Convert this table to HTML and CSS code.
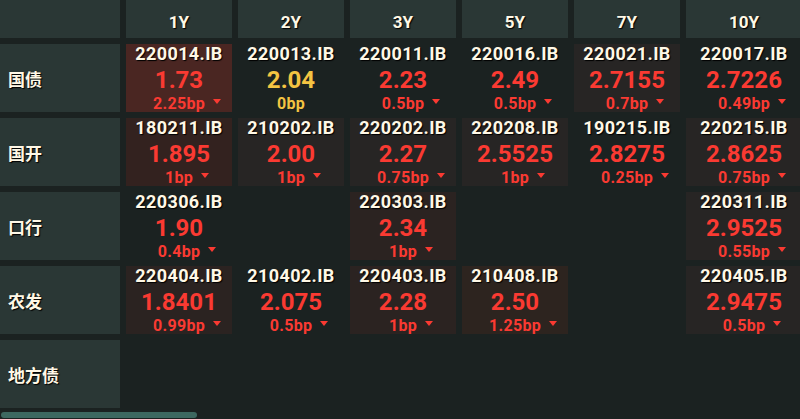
FILE: index.html
```html
<!DOCTYPE html>
<html lang="zh-CN">
<head>
  <meta charset="UTF-8">
  <meta name="viewport" content="width=device-width, initial-scale=1.0">
  <title>利率债报价</title>
  <link rel="stylesheet" href="styles.css">
</head>
<body>
  <div class="wrap">
    <div class="board">
      <!-- header -->
      <div class="head"></div>
      <div class="head">1Y</div>
      <div class="head">2Y</div>
      <div class="head">3Y</div>
      <div class="head">5Y</div>
      <div class="head">7Y</div>
      <div class="head">10Y</div>

      <!-- 国债 -->
      <div class="label">国债</div>
      <div class="cell bg-hot">
        <div class="code">220014.IB</div>
        <div class="yield">1.73</div>
        <div class="chg"><span class="down">2.25bp</span></div>
      </div>
      <div class="cell flat">
        <div class="code">220013.IB</div>
        <div class="yield">2.04</div>
        <div class="chg"><span>0bp</span></div>
      </div>
      <div class="cell">
        <div class="code">220011.IB</div>
        <div class="yield">2.23</div>
        <div class="chg"><span class="down">0.5bp</span></div>
      </div>
      <div class="cell">
        <div class="code">220016.IB</div>
        <div class="yield">2.49</div>
        <div class="chg"><span class="down">0.5bp</span></div>
      </div>
      <div class="cell bg-gray">
        <div class="code">220021.IB</div>
        <div class="yield">2.7155</div>
        <div class="chg"><span class="down">0.7bp</span></div>
      </div>
      <div class="cell">
        <div class="code">220017.IB</div>
        <div class="yield">2.7226</div>
        <div class="chg"><span class="down">0.49bp</span></div>
      </div>

      <!-- 国开 -->
      <div class="label">国开</div>
      <div class="cell bg-red">
        <div class="code">180211.IB</div>
        <div class="yield">1.895</div>
        <div class="chg"><span class="down">1bp</span></div>
      </div>
      <div class="cell bg-gray">
        <div class="code">210202.IB</div>
        <div class="yield">2.00</div>
        <div class="chg"><span class="down">1bp</span></div>
      </div>
      <div class="cell bg-gray">
        <div class="code">220202.IB</div>
        <div class="yield">2.27</div>
        <div class="chg"><span class="down">0.75bp</span></div>
      </div>
      <div class="cell bg-gray">
        <div class="code">220208.IB</div>
        <div class="yield">2.5525</div>
        <div class="chg"><span class="down">1bp</span></div>
      </div>
      <div class="cell">
        <div class="code">190215.IB</div>
        <div class="yield">2.8275</div>
        <div class="chg"><span class="down">0.25bp</span></div>
      </div>
      <div class="cell bg-gray">
        <div class="code">220215.IB</div>
        <div class="yield">2.8625</div>
        <div class="chg"><span class="down">0.75bp</span></div>
      </div>

      <!-- 口行 -->
      <div class="label">口行</div>
      <div class="cell">
        <div class="code">220306.IB</div>
        <div class="yield">1.90</div>
        <div class="chg"><span class="down">0.4bp</span></div>
      </div>
      <div class="cell empty"></div>
      <div class="cell bg-brown">
        <div class="code">220303.IB</div>
        <div class="yield">2.34</div>
        <div class="chg"><span class="down">1bp</span></div>
      </div>
      <div class="cell empty"></div>
      <div class="cell empty"></div>
      <div class="cell bg-gray">
        <div class="code">220311.IB</div>
        <div class="yield">2.9525</div>
        <div class="chg"><span class="down">0.55bp</span></div>
      </div>

      <!-- 农发 -->
      <div class="label">农发</div>
      <div class="cell bg-brown">
        <div class="code">220404.IB</div>
        <div class="yield">1.8401</div>
        <div class="chg"><span class="down">0.99bp</span></div>
      </div>
      <div class="cell">
        <div class="code">210402.IB</div>
        <div class="yield">2.075</div>
        <div class="chg"><span class="down">0.5bp</span></div>
      </div>
      <div class="cell bg-brown">
        <div class="code">220403.IB</div>
        <div class="yield">2.28</div>
        <div class="chg"><span class="down">1bp</span></div>
      </div>
      <div class="cell bg-tan">
        <div class="code">210408.IB</div>
        <div class="yield">2.50</div>
        <div class="chg"><span class="down">1.25bp</span></div>
      </div>
      <div class="cell empty"></div>
      <div class="cell bg-gray">
        <div class="code">220405.IB</div>
        <div class="yield">2.9475</div>
        <div class="chg"><span class="down">0.5bp</span></div>
      </div>

      <!-- 地方债 -->
      <div class="label">地方债</div>
      <div class="cell empty"></div>
      <div class="cell empty"></div>
      <div class="cell empty"></div>
      <div class="cell empty"></div>
      <div class="cell empty"></div>
      <div class="cell empty"></div>
    </div>

    <div class="scrollbar">
      <div class="thumb"></div>
    </div>
  </div>
</body>
</html>
```

FILE: styles.css
```css
body {
  margin: 0;
  padding: 0;
  background-color: #1b2221;
  font-family: Roboto, "Noto Sans CJK SC", sans-serif;
  font-weight: bold;
  color: #fff8e6;
}

.wrap {
  width: 800px;
  height: 419px;
  overflow: hidden;
}

.board {
  display: grid;
  grid-template-columns: 120px repeat(5, 106px) 116px;
  grid-template-rows: 38px repeat(5, 68px);
  gap: 6px;
}

.head {
  background-color: #2a3735;
  font-size: 17px;
  line-height: 38px;
  padding-top: 3px;
  box-sizing: border-box;
  text-align: center;
  text-shadow: 1px 1px 1px #000;
}

.label {
  background-color: #2a3735;
  display: flex;
  align-items: center;
  padding-left: 8px;
  font-size: 17px;
  font-family: "Noto Sans CJK SC", sans-serif;
  text-shadow: 1px 1px 1px #000;
}

.cell {
  display: flex;
  flex-direction: column;
  text-align: center;
  color: #fa3a32;
}

.bg-hot {
  background-color: #4a2622;
}

.bg-red {
  background-color: #33221f;
}

.bg-brown {
  background-color: #2b2321;
}

.bg-tan {
  background-color: #2d241f;
}

.bg-gray {
  background-color: #272524;
}

.code {
  height: 20px;
  font-size: 18px;
  line-height: 20px;
  letter-spacing: 0.4px;
  color: #fff8e6;
  text-shadow: 1px 1px 1px #000;
}

.yield {
  height: 28px;
  margin-top: 2px;
  font-size: 24px;
  line-height: 28px;
}

.chg {
  height: 18px;
  margin-top: 1px;
  font-size: 16px;
  line-height: 18px;
  letter-spacing: 0.3px;
}

.chg span {
  position: relative;
}

.down::after {
  content: "";
  position: absolute;
  left: 100%;
  top: 5px;
  margin-left: 8px;
  border-left: 4px solid transparent;
  border-right: 4px solid transparent;
  border-top: 5px solid #fa3a32;
}

.flat {
  color: #f4c442;
}

.scrollbar {
  height: 10px;
  margin-top: 4px;
}

.thumb {
  width: 196px;
  height: 6px;
  margin-left: 1px;
  border-radius: 3px;
  background-color: #3d6860;
}
```
